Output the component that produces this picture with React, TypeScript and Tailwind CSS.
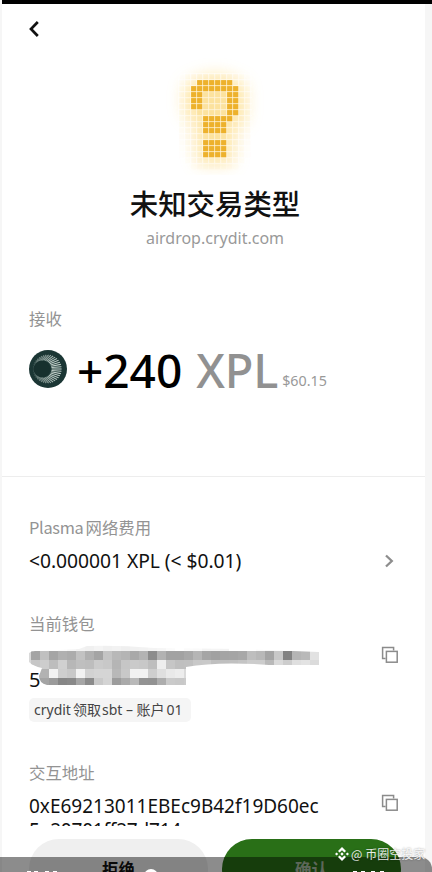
import React from 'react';

const LATIN = "font-['Noto_Sans','Noto_Sans_CJK_SC',sans-serif]";
const CJK = "font-['Noto_Sans_CJK_SC','Noto_Sans',sans-serif]";

const GLYPH = [
  '.XXXXXX.',
  'XXXXXXXX',
  'XXooooXX',
  'XXooooXX',
  'XXooooXX',
  '.oooooXX',
  '..XXXXX.',
  '..XXXX..',
  '..XXXX..',
  '..oooo..',
  '..XXXX..',
  '..XXXX..',
  '..XXXX..',
];

function QuestionGlyph() {
  const cells: React.ReactNode[] = [];
  for (let r = -1; r < 15; r++) {
    for (let c = -2; c < 10; c++) {
      const k = GLYPH[r]?.[c] ?? '.';
      const far = Math.hypot((c - 3.5) / 6, (r - 6) / 9);
      cells.push(
        <rect
          key={`${r}:${c}`}
          x={26.1 + c * 6}
          y={25.1 + r * 6}
          width="5.2"
          height="5.2"
          fill={k === 'X' ? '#edb12c' : '#f9d98c'}
          opacity={k === 'X' ? 1 : k === 'o' ? 0.5 : Math.max(0, 0.4 - far * 0.34)}
        />,
      );
    }
  }
  return (
    <svg width="100" height="120" viewBox="0 0 100 120">
      <defs>
        <filter id="glow" x="-50%" y="-50%" width="200%" height="200%">
          <feGaussianBlur stdDeviation="8" />
        </filter>
      </defs>
      <path d="M24 33Q50 16 76 33V62L63 72V104H37V67L24 56Z" fill="#ffe7a3" stroke="#ffe7a3" strokeWidth="10" opacity=".85" filter="url(#glow)" />
      <path
        d={Array.from({ length: 13 }, (_, i) => `M${13.7 + i * 6} 18V108`).join('') + Array.from({ length: 16 }, (_, i) => `M13 ${18.7 + i * 6}H87`).join('')}
        stroke="#fff"
        strokeWidth="1"
        opacity=".6"
      />
      {cells}
    </svg>
  );
}

function TokenIcon() {
  return (
    <svg width="38" height="38" viewBox="0 0 38 38">
      <circle cx="19" cy="19" r="19" fill="#1b3634" />
      {Array.from({ length: 38 }, (_, i) => {
        const a = ((i * 360) / 38) * (Math.PI / 180);
        const x = Math.cos(a);
        const y = Math.sin(a);
        return (
          <line
            key={i}
            x1={14 + x * 8.6}
            y1={19 + y * 8.6}
            x2={18.4 + x * 14.2}
            y2={19 + y * 14.2}
            stroke="#cfdcd6"
            strokeWidth="1.05"
            opacity={0.3 + 0.65 * ((x + 1) / 2)}
          />
        );
      })}
      <circle cx="12.8" cy="19" r="8.3" fill="#17302e" />
    </svg>
  );
}

function CopyIcon() {
  return (
    <svg width="18" height="18" viewBox="0 0 18 18" fill="none" stroke="#8b8b8b" strokeWidth="1.5">
      <path d="M4.6 12.4H1.6V1.4H12.6V4.6" />
      <rect x="5.4" y="5.4" width="10.8" height="10.8" />
    </svg>
  );
}

const MOSAIC: string[][] = [
  'ff fb fd fa f6 f2 f0 f4 f0 f2 ef f1 f2 f4 f6 fb ff fb fa f4 f5 f3 ff ff ff fa f7 f7 ff ff ff ff'.split(' '),
  'a4 c0 a5 b0 ac c2 b0 a4 c4 b8 b4 a9 b3 8c b2 a2 a2 a8 b5 a5 a1 a4 a5 a8 be b8 a4 c8 82 b5 b9 e2'.split(' '),
  'c6 cd bd d0 b7 bf bd cb c8 b5 c6 ca c8 be ee c6 bf c0 c8 c9 bf bf c0 c4 cc cc b9 da cd df e3 db'.split(' '),
  'a8 b2 f2 ce c8 f2 d2 d5 d5 b8 c8 f2 f2 ce df e9 ed db'.split(' '),
  'a4 a4 9b 86 89 a6 8b c9 d4 9c aa b9 93 92 ad ca c8 cb'.split(' '),
];

function MaskedAddress() {
  return (
    <svg width="300" height="44" viewBox="0 0 300 44">
      <defs>
        <clipPath id="brush">
          <path d="M0 9Q2 7 6 7L50 5L58 2Q90 1 125 4L215 5L290 8V21H240Q190 17 157 23V41H18Q10 39 10 32L13 24Q4 22 0 18Z" />
        </clipPath>
      </defs>
      <g clipPath="url(#brush)" shapeRendering="crispEdges">
        <rect x="0" y="7" width="4" height="14" fill="#d9d9d9" />
        {MOSAIC.map((row, r) =>
          row.map((v, c) => (
            <rect key={`${r}:${c}`} x={2 + c * 9} y={r * 9 - 2} width="9" height="9" fill={`#${v}${v}${v}`} />
          )),
        )}
      </g>
    </svg>
  );
}

function WatermarkLogo() {
  return (
    <svg width="14" height="14" viewBox="0 0 14 14" fill="#fff">
      <path d="M7 0l4 4-1.6 1.6L7 3.2 4.6 5.6 3 4zM7 14l4-4-1.6-1.6L7 10.8 4.6 8.4 3 10zM7 5.3L8.7 7 7 8.7 5.3 7zM1.6 5.4L3.2 7 1.6 8.6 0 7zM12.4 5.4L14 7l-1.6 1.6L10.8 7z" />
    </svg>
  );
}

const Label = ({ children }: { children: React.ReactNode }) => (
  <div className={`h-6 whitespace-nowrap text-[16.4px] leading-6 text-[#939393] ${CJK}`}>{children}</div>
);

export default function App() {
  return (
    <div className={`relative h-[872px] w-[432px] overflow-hidden bg-[#f6f6f6] pl-[2px] text-[#111] ${LATIN}`}>
      <div className="h-1 bg-black" />
      <main className="flex h-[868px] w-[423px] flex-col bg-white">
        <header className="flex h-[51px] shrink-0 items-start pl-[26px] pt-[16px]">
          <svg width="12" height="18" viewBox="0 0 12 18" fill="none" stroke="#111" strokeWidth="2.7">
            <path d="M9.8 2L3 9l6.800 7" />
          </svg>
        </header>
        <section className="flex h-[421px] shrink-0 flex-col">
          <div className="flex h-[120px] shrink-0 pl-[163px]">
            <QuestionGlyph />
          </div>
          <h1 className={`mt-[8px] h-10 pl-[3px] text-center text-[28.4px] font-medium leading-10 ${CJK}`}>未知交易类型</h1>
          <div className="h-6 pl-[3px] pt-[3px] text-center text-[16px] leading-6 text-[#999]">airdrop.crydit.com</div>
          <div className="mt-[59px] pl-[27px]">
            <Label>接收</Label>
          </div>
          <div className="mt-[8px] flex h-[60px] items-start pl-[27px]">
            <div className="pt-[12px]">
              <TokenIcon />
            </div>
            <span className="ml-[10px] pt-[2px] text-[46px] font-medium leading-[60px] text-black">+240</span>
            <span className="ml-[14px] pt-[2px] text-[47px] font-medium leading-[60px] tracking-[-0.2px] text-[#919191]">XPL</span>
            <span className="ml-[4px] pt-[28px] text-[14.3px] leading-[30px] text-[#999]">$60.15</span>
          </div>
        </section>
        <div className="h-[1px] shrink-0 bg-[#ededed]" />
        <section className="flex flex-col pl-[27px] pt-[38px]">
          <Label>
            <span className="tracking-[-0.3px]">Plasma</span>
            <span className="ml-[2px]">网络费用</span>
          </Label>
          <div className="mt-[6px] flex h-8 items-center justify-between pr-[31px]">
            <span className="whitespace-nowrap text-[19.3px] tracking-[-0.05px]">&lt;0.000001 XPL (&lt; $0.01)</span>
            <svg width="10" height="14" viewBox="0 0 10 14" fill="none" stroke="#8d8d8d" strokeWidth="2.3">
              <path d="M2 1.500L7.800 7 2 12.500" />
            </svg>
          </div>
          <div className="mt-[34px]">
            <Label>当前钱包</Label>
          </div>
          <div className="mt-[9px] flex h-[50px] justify-between pr-[26px]">
            <div className="relative h-[50px] w-[300px]">
              <div className="pt-[22px] text-[20px] leading-[27px]">5</div>
              <div className="absolute left-0 top-0">
                <MaskedAddress />
              </div>
            </div>
            <div className="pt-[2px]">
              <CopyIcon />
            </div>
          </div>
          <div className="mt-[4px] h-6 w-[162px] whitespace-nowrap rounded-[5px] bg-[#f5f5f5] pl-[5px] text-[14px] leading-[24px] text-[#444]">
            crydit<span className="ml-[2px]">领取</span>
            <span className="ml-[1px]">sbt – 账户</span>
            <span className="ml-[2px]">01</span>
          </div>
          <div className="mt-[38px]">
            <Label>交互地址</Label>
          </div>
          <div className="mt-[8px] flex h-[34px] justify-between overflow-hidden pr-[26px]">
            <div className="h-[34px] overflow-hidden whitespace-nowrap text-[19px] leading-[28px]">
              <div>0xE69213011EBEc9B42f19D60ec</div>
              <div className="-mt-[4px] tracking-[-0.2px]">5a20701ff27d714</div>
            </div>
            <div className="pt-[2px]">
              <CopyIcon />
            </div>
          </div>
        </section>
      </main>
      <footer className={`absolute left-[29px] top-[839px] flex h-[60px] gap-[14px] text-[16.5px] font-bold ${CJK}`}>
        <div className="h-[60px] w-[179px] rounded-[30px] bg-[#efefef] pt-[18px] text-center leading-6">拒绝</div>
        <div className="h-[60px] w-[179px] rounded-[30px] bg-[#296f17] pt-[18px] text-center leading-6 text-[#a9bca4]">确认</div>
      </footer>
      <div className="absolute left-0 top-[857px] h-[30px] w-[432px] rounded-tr-[12px] bg-black/45" />
      <svg className="absolute left-0 top-[862px]" width="432" height="10" viewBox="0 0 432 10" fill="#fff">
        <path d="M27 9h4v1h-4zM34 9h4v1h-4zM45 9h4v1h-4zM53 9h4v1h-4zM353 9h4v1h-4zM361 9h4v1h-4zM371 9h4v1h-4zM380 9h4v1h-4z" />
        <circle cx="151" cy="14" r="7" />
      </svg>
      <div className={`absolute left-[335px] top-[846px] flex h-4 items-center whitespace-nowrap text-[12px] leading-4 text-white/90 [text-shadow:0_0_2px_rgba(0,0,0,0.45)] ${CJK}`}>
        <WatermarkLogo />
        <span className="ml-[2px]">@</span>
        <span className="ml-[3px]">币圈空投家</span>
      </div>
    </div>
  );
}
